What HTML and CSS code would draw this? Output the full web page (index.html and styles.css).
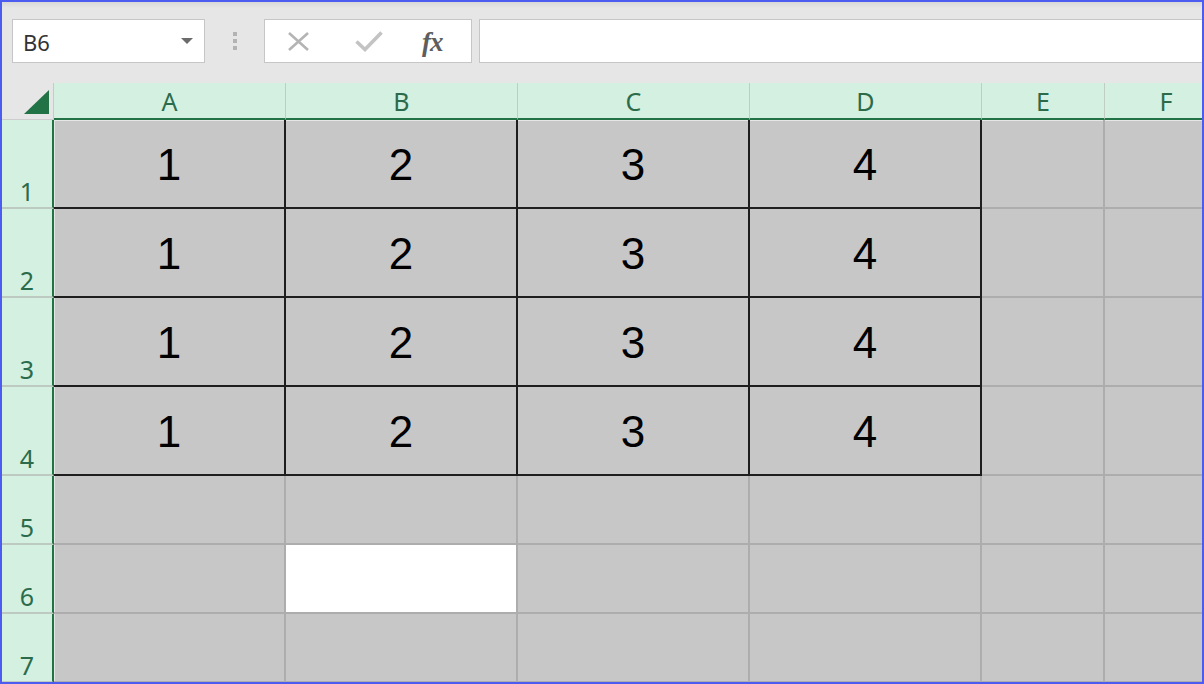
FILE: index.html
```html
<!DOCTYPE html>
<html lang="en">
<head>
<meta charset="utf-8">
<title>Excel sheet</title>
<link rel="stylesheet" href="styles.css">
</head>
<body>
<div class="frame">
  <div class="toolbar">
    <div class="namebox">
      <span class="name">B6</span>
      <svg class="caret" width="12" height="6" viewBox="0 0 12 6"><path d="M0 0 H12 L6 6 Z" fill="#6b6b6b"/></svg>
    </div>
    <div class="grip"><i></i><i></i><i></i></div>
    <div class="fxbox">
      <svg class="icon-x" width="23" height="21" viewBox="0 0 23 21"><path d="M2 2 L21 19 M21 2 L2 19" stroke="#b4b4b4" stroke-width="2.6" fill="none"/></svg>
      <svg class="icon-check" width="28" height="21" viewBox="0 0 28 21"><path d="M1.5 10.5 L10 18.5 L26.5 1.5" stroke="#c3c3c3" stroke-width="3.6" fill="none"/></svg>
      <span class="fx">fx</span>
    </div>
    <div class="formula"></div>
  </div>
  <div class="sheet">
    <div class="corner"><svg width="25" height="24" viewBox="0 0 25 24"><path d="M0 24 H25 V0 Z" fill="#217346"/></svg></div>
    <div class="colhead">A</div>
    <div class="colhead">B</div>
    <div class="colhead">C</div>
    <div class="colhead">D</div>
    <div class="colhead">E</div>
    <div class="colhead">F</div>

    <div class="rowhead">1</div>
    <div class="cell b top first">1</div>
    <div class="cell b top">2</div>
    <div class="cell b top">3</div>
    <div class="cell b top">4</div>
    <div class="cell top"></div>
    <div class="cell top"></div>

    <div class="rowhead">2</div>
    <div class="cell b first">1</div>
    <div class="cell b">2</div>
    <div class="cell b">3</div>
    <div class="cell b">4</div>
    <div class="cell"></div>
    <div class="cell"></div>

    <div class="rowhead">3</div>
    <div class="cell b first">1</div>
    <div class="cell b">2</div>
    <div class="cell b">3</div>
    <div class="cell b">4</div>
    <div class="cell"></div>
    <div class="cell"></div>

    <div class="rowhead">4</div>
    <div class="cell b first">1</div>
    <div class="cell b">2</div>
    <div class="cell b">3</div>
    <div class="cell b">4</div>
    <div class="cell"></div>
    <div class="cell"></div>

    <div class="rowhead">5</div>
    <div class="cell first"></div>
    <div class="cell"></div>
    <div class="cell"></div>
    <div class="cell"></div>
    <div class="cell"></div>
    <div class="cell"></div>

    <div class="rowhead">6</div>
    <div class="cell first"></div>
    <div class="cell active"></div>
    <div class="cell"></div>
    <div class="cell"></div>
    <div class="cell"></div>
    <div class="cell"></div>

    <div class="rowhead">7</div>
    <div class="cell first"></div>
    <div class="cell"></div>
    <div class="cell"></div>
    <div class="cell"></div>
    <div class="cell"></div>
    <div class="cell"></div>
  </div>
</div>
</body>
</html>
```
FILE: styles.css
```css
html, body {
  margin: 0;
  padding: 0;
  background: #4d5cf0;
}

.frame {
  width: 1204px;
  height: 684px;
  box-sizing: border-box;
  border: 2px solid #4d5cf0;
  overflow: hidden;
  display: flex;
  flex-direction: column;
  background: #e6e6e6;
}

/* ---------- formula bar ---------- */
.toolbar {
  height: 81px;
  flex: none;
  box-sizing: border-box;
  padding: 17px 0 0 10px;
  display: flex;
  align-items: flex-start;
  background: linear-gradient(#d8d8d8, #e6e6e6 6px);
}

.namebox {
  width: 193px;
  height: 44px;
  box-sizing: border-box;
  border: 1px solid #c6c6c6;
  background: #fff;
  display: flex;
  align-items: center;
  justify-content: space-between;
  padding: 2px 11px 0 10px;
}

.name {
  font-family: "Noto Sans", "Open Sans", sans-serif;
  font-size: 22px;
  color: #333;
  line-height: 1;
}

.caret {
  display: block;
  margin-top: -2px;
}

.grip {
  width: 59px;
  height: 44px;
  display: flex;
  flex-direction: column;
  align-items: center;
  justify-content: center;
  gap: 3px;
}

.grip i {
  display: block;
  width: 4px;
  height: 4px;
  background: #b3b3b3;
}

.fxbox {
  width: 208px;
  height: 44px;
  box-sizing: border-box;
  border: 1px solid #c6c6c6;
  background: #fff;
  display: flex;
  align-items: center;
  padding-left: 22px;
}

.icon-x {
  display: block;
  margin-top: 1px;
}

.icon-check {
  display: block;
  margin-left: 45px;
  margin-top: 1px;
}

.fx {
  margin-left: 39px;
  margin-top: 2px;
  font-family: "Liberation Serif", "DejaVu Serif", serif;
  font-style: italic;
  font-weight: bold;
  font-size: 27px;
  color: #5e5e5e;
  line-height: 1;
  letter-spacing: -1px;
}

.formula {
  flex: 1;
  height: 44px;
  margin-left: 7px;
  box-sizing: border-box;
  border: 1px solid #c6c6c6;
  border-right: none;
  background: #fff;
}

/* ---------- grid ---------- */
.sheet {
  flex: 1;
  display: grid;
  grid-template-columns: 52px 232px 232px 232px 232px 123px 123px;
  grid-template-rows: 37px 89px 89px 89px 89px 69px 69px 69px;
  overflow: hidden;
  font-family: "Noto Sans", "Open Sans", sans-serif;
}

.corner {
  box-sizing: border-box;
  background: #e6e6e6;
  border-right: 1px solid #c9c9c9;
  border-bottom: 1px solid #cdcdcd;
  display: flex;
  align-items: flex-end;
  justify-content: flex-end;
  padding: 0 4px 5px 0;
}

.corner svg {
  display: block;
}

.colhead {
  box-sizing: border-box;
  background: #d3f0e0;
  border-right: 1px solid #bfcdc4;
  border-bottom: 2px solid #217346;
  color: #2b6b4b;
  font-size: 25px;
  line-height: 1;
  display: flex;
  align-items: center;
  justify-content: center;
  padding-top: 1px;
}

.rowhead {
  box-sizing: border-box;
  background: #d3f0e0;
  border-right: 2px solid #217346;
  border-bottom: 2px solid #bccac1;
  color: #2b6b4b;
  font-size: 25px;
  line-height: 1;
  display: flex;
  align-items: flex-end;
  justify-content: center;
  padding-bottom: 3px;
}

.cell {
  box-sizing: border-box;
  background: #c7c7c7;
  border-right: 2px solid #adadad;
  border-bottom: 2px solid #adadad;
  font-family: "Liberation Sans", Arial, sans-serif;
  font-size: 44px;
  line-height: 1;
  color: #000;
  display: flex;
  align-items: center;
  justify-content: center;
  padding-top: 3px;
}

.cell.b {
  border-right-color: #1e1e1e;
  border-bottom-color: #1e1e1e;
}

.cell.top {
  box-shadow: inset 0 1px 0 #e6e6e6;
}

.cell.first {
  box-shadow: inset 1px 0 0 #e6e6e6;
}

.cell.top.first {
  box-shadow: inset 1px 1px 0 #e6e6e6;
}

.cell.active {
  background: #fff;
}
```
